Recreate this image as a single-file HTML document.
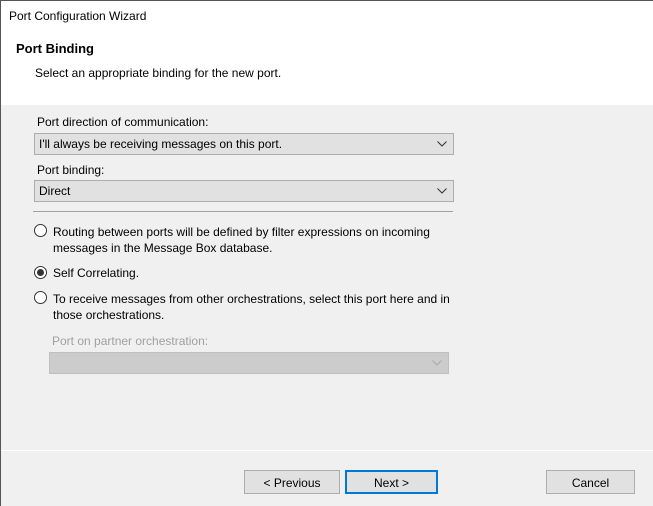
<!DOCTYPE html>
<html><head><style>
*{margin:0;padding:0;box-sizing:border-box}
body{width:653px;height:506px;position:relative;background:#f0f0f0;font-family:"Liberation Sans",sans-serif;font-size:12px;color:#000;overflow:hidden}
.a{position:absolute;white-space:nowrap}
.hdr{position:absolute;left:0;top:0;width:653px;height:105px;background:#fff}
.cb{position:absolute;background:#e1e1e1;border:1px solid #adadad;padding:3px 0 0 4px;height:22px}
.cb svg{position:absolute;right:6px;top:7px}
.r{position:absolute;width:13px;height:13px;border:1px solid #333;border-radius:50%;background:#fff}
.btn{position:absolute;top:470px;height:24px;background:#e1e1e1;border:1px solid #adadad;text-align:center;line-height:24px}
</style></head><body>
<div class="hdr"></div>
<div class="a" style="left:0;top:0;width:653px;height:1px;background:#555"></div>
<div class="a" style="left:9px;top:9px">Port Configuration Wizard</div>
<div class="a" style="left:16px;top:41px;font-weight:bold;font-size:13px">Port Binding</div>
<div class="a" style="left:35px;top:66px">Select an appropriate binding for the new port.</div>
<div class="a" style="left:37px;top:115px">Port direction of communication:</div>
<div class="cb" style="left:34px;top:133px;width:420px">I'll always be receiving messages on this port.<svg width="10" height="6"><path d="M0.5 0.5L5 5L9.5 0.5" fill="none" stroke="#333"/></svg></div>
<div class="a" style="left:37px;top:163px">Port binding:</div>
<div class="cb" style="left:34px;top:180px;width:420px">Direct<svg width="10" height="6"><path d="M0.5 0.5L5 5L9.5 0.5" fill="none" stroke="#333"/></svg></div>
<div class="a" style="left:33px;top:211px;width:420px;height:1px;background:#a0a0a0"></div>
<div class="r" style="left:34px;top:224px"></div>
<div class="a" style="left:53px;top:224px;line-height:16px">Routing between ports will be defined by filter expressions on incoming<br>messages in the Message Box database.</div>
<div class="r" style="left:34px;top:266px"><div style="position:absolute;left:2px;top:2px;width:7px;height:7px;border-radius:50%;background:#333"></div></div>
<div class="a" style="left:53px;top:266px">Self Correlating.</div>
<div class="r" style="left:34px;top:291px"></div>
<div class="a" style="left:53px;top:291px;line-height:16px">To receive messages from other orchestrations, select this port here and in<br>those orchestrations.</div>
<div class="a" style="left:52px;top:334px;color:#a0a0a0">Port on partner orchestration:</div>
<div class="cb" style="left:49px;top:352px;width:400px;background:#ccc;border-color:#bfbfbf"><svg width="10" height="6"><path d="M0.5 0.5L5 5L9.5 0.5" fill="none" stroke="#aaa"/></svg></div>
<div class="a" style="left:1px;top:450px;width:652px;height:1px;background:#fff"></div>
<div class="a" style="left:0;top:0;width:1px;height:506px;background:#555"></div>
<div class="btn" style="left:244px;width:96px">&lt; Previous</div>
<div class="btn" style="left:345px;width:93px;border:2px solid #0078d7;line-height:22px">Next &gt;</div>
<div class="btn" style="left:546px;width:89px">Cancel</div>
</body></html>
